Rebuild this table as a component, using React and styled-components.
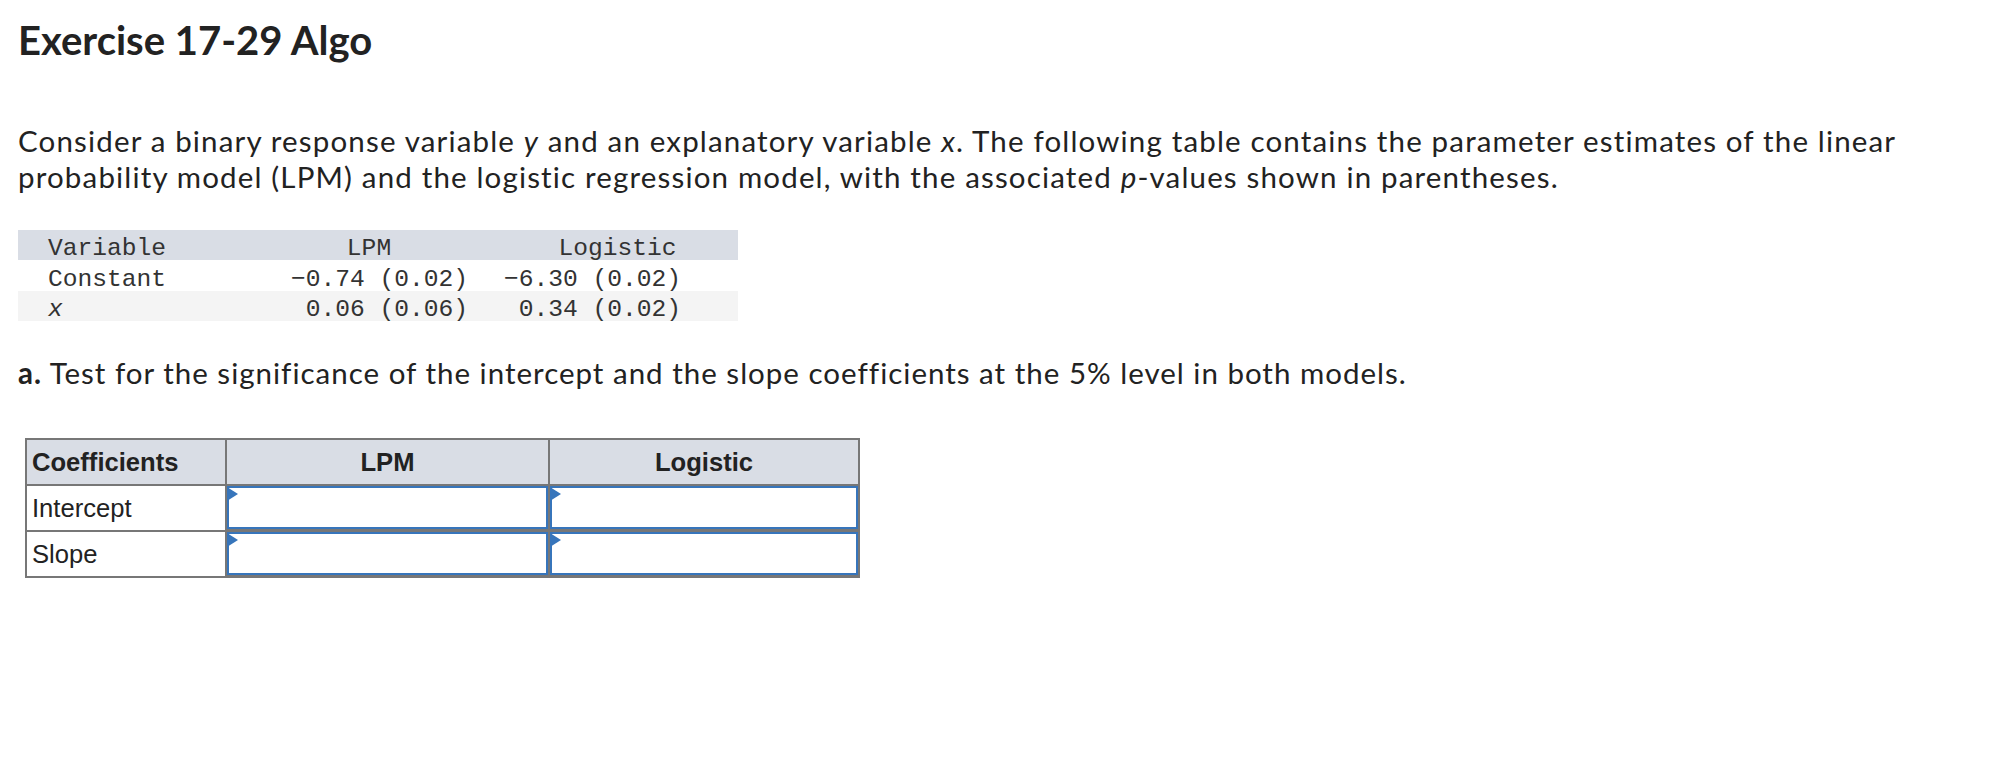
import React from "react";
import styled, { createGlobalStyle } from "styled-components";

const Global = createGlobalStyle`
  html, body { margin: 0; padding: 0; background: #fff; }
  body { font-family: "Lato", "Open Sans", sans-serif; color: #222; }
`;

const Page = styled.div`
  padding: 16px 18px 0 18px;
`;

const Title = styled.h1`
  margin: 0;
  font-family: "Lato", sans-serif;
  font-weight: 700;
  font-size: 40px;
  line-height: 48px;
  color: #222;
`;

const Para = styled.p`
  margin: 59px 0 0 0;
  max-width: 1960px;
  font-size: 29.5px;
  line-height: 35.5px;
  letter-spacing: 1.16px;
  color: #222;
`;

const DataTable = styled.div`
  margin-top: 36px;
  width: 720px;
  display: grid;
  grid-template-columns: 223px 256px 241px;
  font-family: "Liberation Mono", "Courier New", monospace;
  font-size: 24.6px;
  color: #333;
`;

const DataRow = styled.div`
  display: contents;
`;

const DataCell = styled.div`
  height: 30.33px;
  box-sizing: border-box;
  display: flex;
  align-items: flex-end;
  line-height: 0.85;
  background: ${(p) => p.$bg};
  justify-content: ${(p) => p.$align};
  padding-left: ${(p) => p.$pl || 0}px;
  padding-right: ${(p) => p.$pr || 0}px;
  white-space: pre;
  font-style: ${(p) => (p.$italic ? "italic" : "normal")};
`;

const Question = styled.p`
  margin: 34px 0 0 0;
  font-size: 29.5px;
  line-height: 35.5px;
  letter-spacing: 1px;
  color: #222;
`;

const AnswerGrid = styled.div`
  margin-top: 48px;
  margin-left: 7px;
  display: inline-grid;
  grid-template-columns: 198px 321px 308px;
  grid-auto-rows: 44px;
  gap: 2px;
  padding: 2px;
  background: #777;
  font-family: "Liberation Sans", Arial, sans-serif;
  font-size: 25.6px;
  color: #222;
`;

const HeadCell = styled.div`
  background: #d9dde5;
  display: flex;
  align-items: center;
  justify-content: ${(p) => (p.$left ? "flex-start" : "center")};
  padding-left: ${(p) => (p.$left ? "5px" : "0")};
  font-weight: 700;
`;

const LabelCell = styled.div`
  background: #fff;
  display: flex;
  align-items: center;
  padding-left: 5px;
`;

const InputCell = styled.div`
  background: #fff;
  position: relative;
  box-sizing: border-box;
  border: 2px solid #3775bb;
  margin: 0 0 1px 0;
  &::before {
    content: "";
    position: absolute;
    left: -2px;
    top: -1px;
    width: 0;
    height: 0;
    border-top: 7px solid transparent;
    border-bottom: 7px solid transparent;
    border-left: 11px solid #3775bb;
  }
`;

const rows = [
  { bg: "#d9dde5", cells: ["Variable", "LPM", "Logistic"], head: true },
  { bg: "#ffffff", cells: ["Constant", "−0.74 (0.02)", "−6.30 (0.02)"] },
  { bg: "#f4f4f4", cells: ["x", "0.06 (0.06)", "0.34 (0.02)"], italic: true },
];

export default function App() {
  return (
    <Page>
      <Global />
      <Title>Exercise 17-29 Algo</Title>
      <Para>
        Consider a binary response variable <i>y</i> and an explanatory variable <i>x</i>. The
        following table contains the parameter estimates of the linear probability model (LPM) and
        the logistic regression model, with the associated <i>p</i>-values shown in parentheses.
      </Para>
      <DataTable>
        {rows.map((r, i) => (
          <DataRow key={i}>
            <DataCell $bg={r.bg} $align="flex-start" $pl={30} $italic={r.italic}>
              {r.cells[0]}
            </DataCell>
            <DataCell
              $bg={r.bg}
              $align={r.head ? "center" : "flex-end"}
              $pr={r.head ? 0 : 29}
            >
              {r.cells[1]}
            </DataCell>
            <DataCell
              $bg={r.bg}
              $align={r.head ? "center" : "flex-end"}
              $pr={r.head ? 0 : 57}
            >
              {r.cells[2]}
            </DataCell>
          </DataRow>
        ))}
      </DataTable>
      <Question>
        <b>a.</b> Test for the significance of the intercept and the slope coefficients at the 5%
        level in both models.
      </Question>
      <AnswerGrid>
        <HeadCell $left>Coefficients</HeadCell>
        <HeadCell>LPM</HeadCell>
        <HeadCell>Logistic</HeadCell>
        <LabelCell>Intercept</LabelCell>
        <InputCell />
        <InputCell />
        <LabelCell>Slope</LabelCell>
        <InputCell />
        <InputCell />
      </AnswerGrid>
    </Page>
  );
}
